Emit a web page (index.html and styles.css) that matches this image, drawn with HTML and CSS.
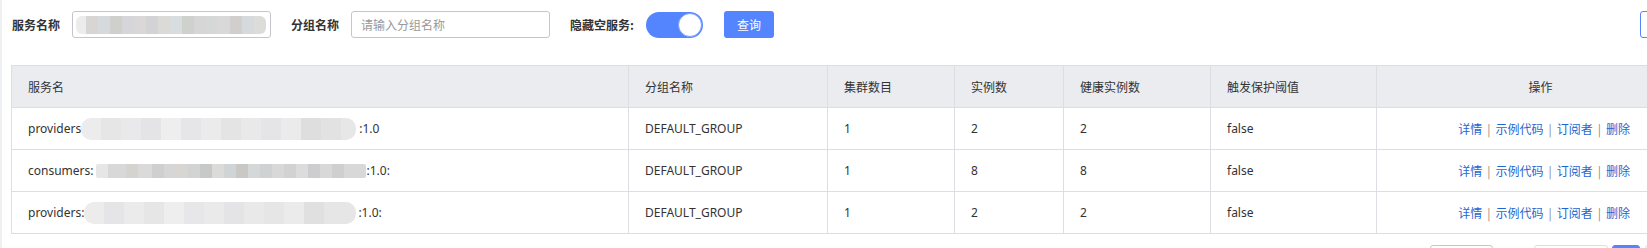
FILE: index.html
```html
<!DOCTYPE html>
<html lang="zh-CN">
<head>
<meta charset="utf-8">
<title>服务列表</title>
<link rel="stylesheet" href="styles.css">
</head>
<body>
<div class="page">
  <div class="toolbar">
    <span class="label">服务名称</span>
    <div class="input"><span class="mask mask-input"></span></div>
    <span class="label label-gap">分组名称</span>
    <div class="input"><span class="placeholder">请输入分组名称</span></div>
    <span class="label label-gap">隐藏空服务:</span>
    <div class="switch"><span class="knob"></span></div>
    <button class="btn-primary">查询</button>
    <button class="btn-outline"></button>
  </div>

  <table class="tbl">
    <colgroup>
      <col class="c1"><col class="c2"><col class="c3"><col class="c4"><col class="c5"><col class="c6"><col class="c7">
    </colgroup>
    <thead>
      <tr>
        <th>服务名</th><th>分组名称</th><th>集群数目</th><th>实例数</th><th>健康实例数</th><th>触发保护阈值</th><th class="center">操作</th>
      </tr>
    </thead>
    <tbody>
      <tr>
        <td><span class="name">providers<span class="mask mask-a"></span>:1.0</span></td>
        <td>DEFAULT_GROUP</td><td>1</td><td>2</td><td>2</td><td>false</td>
        <td class="ops"><a>详情</a><i>|</i><a>示例代码</a><i>|</i><a>订阅者</a><i>|</i><a>删除</a></td>
      </tr>
      <tr>
        <td><span class="name">consumers:<span class="mask mask-b"></span>:1.0:</span></td>
        <td>DEFAULT_GROUP</td><td>1</td><td>8</td><td>8</td><td>false</td>
        <td class="ops"><a>详情</a><i>|</i><a>示例代码</a><i>|</i><a>订阅者</a><i>|</i><a>删除</a></td>
      </tr>
      <tr>
        <td><span class="name">providers:<span class="mask mask-c"></span>:1.0:</span></td>
        <td>DEFAULT_GROUP</td><td>1</td><td>2</td><td>2</td><td>false</td>
        <td class="ops"><a>详情</a><i>|</i><a>示例代码</a><i>|</i><a>订阅者</a><i>|</i><a>删除</a></td>
      </tr>
    </tbody>
  </table>

  <div class="pager">
    <span class="pg pg-size"></span>
    <span class="pg pg-wide"></span>
    <span class="pg pg-active"></span>
    <span class="pg pg-next"></span>
  </div>
</div>
</body>
</html>
```

FILE: styles.css
```css
html, body {
  margin: 0;
  padding: 0;
  background: #fff;
  overflow: hidden;
  height: 248px;
}
body {
  font-family: "Noto Sans", "Noto Sans CJK SC", sans-serif;
  font-size: 12px;
  color: #333;
}
.page {
  width: 1718px;
  height: 248px;
  overflow: hidden;
  border-left: 2px solid #eef0f4;
  box-sizing: border-box;
}
.toolbar {
  display: flex;
  align-items: center;
  height: 27px;
  padding: 11px 18px 0 10px;
}
.label {
  font-family: "Noto Sans CJK SC", sans-serif;
  font-weight: 700;
  font-size: 12px;
  color: #333;
  margin-right: 12px;
  white-space: nowrap;
}
.label-gap { margin-left: 20px; }
.input {
  width: 199px;
  height: 27px;
  box-sizing: border-box;
  border: 1px solid #c4c6cf;
  border-radius: 3px;
  display: flex;
  align-items: center;
  padding-left: 9px;
}
.placeholder {
  font-family: "Noto Sans CJK SC", sans-serif;
  color: #999;
  font-size: 12px;
}
.switch {
  width: 57px;
  height: 26px;
  border-radius: 13px;
  background: #5584ff;
  position: relative;
  box-sizing: border-box;
}
.knob {
  position: absolute;
  right: 1px;
  top: 1px;
  width: 24px;
  height: 24px;
  border-radius: 50%;
  background: #fff;
  box-sizing: border-box;
  border: 1px solid #7aa0ff;
}
.btn-primary {
  margin-left: 21px;
  width: 50px;
  height: 27px;
  border: none;
  border-radius: 3px;
  background: #5584ff;
  color: #fff;
  font-family: "Noto Sans CJK SC", sans-serif;
  font-size: 12px;
  padding: 0;
}
.btn-outline {
  margin-left: auto;
  width: 60px;
  height: 27px;
  border: 1px solid #5584ff;
  border-radius: 3px;
  background: #fff;
  padding: 0;
}
.mask {
  display: inline-block;
  vertical-align: middle;
  border-radius: 10px;
  filter: blur(0.6px);
}
.mask-input {
  width: 190px;
  height: 18px;
  margin-left: -6px;
  background: linear-gradient(90deg,
    #ececec 0 10px, #d8d6d4 10px 22px, #d6dadd 22px 34px, #cfcfcb 34px 46px,
    #d6d6d8 46px 58px, #d9d7d8 58px 70px, #d3d2d4 70px 82px, #dcdad6 82px 94px,
    #d8dde0 94px 106px, #cfd1cc 106px 118px, #d6d6d6 118px 130px, #d5d8d6 130px 142px,
    #d9d9d9 142px 154px, #d2cece 154px 166px, #d5dadc 166px 178px, #dcdcdb 178px 190px);
  border-radius: 6px;
}
.tbl {
  margin: 27px 0 0 9px;
  border-collapse: collapse;
  table-layout: fixed;
  width: 1693px;
  border: 1px solid #dcdee3;
}
.c1 { width: 617px; }
.c2 { width: 199px; }
.c3 { width: 127px; }
.c4 { width: 109px; }
.c5 { width: 147px; }
.c6 { width: 166px; }
.c7 { width: 328px; }
.tbl th, .tbl td {
  border: 1px solid #dcdee3;
  text-align: left;
  padding: 0 0 0 16px;
  font-weight: 400;
  white-space: nowrap;
  overflow: hidden;
}
.tbl th {
  height: 41px;
  background: #ebecf0;
  color: #333;
  font-family: "Noto Sans CJK SC", sans-serif;
}
.tbl td {
  height: 41px;
  color: #333;
}
.tbl th.center { text-align: center; padding-left: 0; }
.name { display: inline-flex; align-items: center; }
.mask-a {
  width: 275px;
  height: 22px;
  margin: 0 3px 0 0;
  background: linear-gradient(90deg,
    #ececec 0 20px, #e6e6e6 20px 40px, #e9e9eb 40px 60px, #e4e4e6 60px 80px,
    #eeeeee 80px 100px, #e6e6e8 100px 120px, #ebebeb 120px 140px, #e4e4e4 140px 160px,
    #e9e9e9 160px 180px, #e5e5e7 180px 200px, #ebebeb 200px 220px, #dedede 220px 240px,
    #e2e2e2 240px 260px, #e7e7e7 260px 275px);
}
.mask-b {
  width: 270px;
  height: 14px;
  border-radius: 2px;
  margin: 0 1px 0 2px;
  background: linear-gradient(90deg,
    #e6e6e6 0 12px, #d8d8d8 12px 30px, #d5d3d0 30px 42px, #dadada 42px 56px,
    #cfcfcf 56px 68px, #d6d6d6 68px 80px, #d8d6d3 80px 92px, #d2d4d4 92px 104px,
    #c8c8c8 104px 116px, #dbdbd9 116px 128px, #d0d4d6 128px 140px, #cac8c4 140px 152px,
    #d4d8d9 152px 164px, #cfd2d2 164px 176px, #d8d8d8 176px 188px, #d2d2d2 188px 200px,
    #dcdcdc 200px 212px, #cdcdcf 212px 224px, #d8d8d8 224px 236px, #cfcfcf 236px 248px,
    #d8d8d8 248px 270px);
}
.mask-c {
  width: 272px;
  height: 22px;
  margin: 0 2px 0 0;
  background: linear-gradient(90deg,
    #ececec 0 20px, #e5e5e7 20px 40px, #ebebeb 40px 60px, #e6e6e6 60px 80px,
    #eeeeee 80px 100px, #e7e7e9 100px 120px, #eaeaea 120px 140px, #e4e4e6 140px 160px,
    #e9e9e9 160px 180px, #e6e6e6 180px 200px, #ebebeb 200px 220px, #e0e0e0 220px 240px,
    #e6e6e6 240px 272px);
}
.ops {
  text-align: right !important;
  padding: 0 74px 0 0 !important;
  font-family: "Noto Sans CJK SC", sans-serif;
}
.ops a {
  color: #1f66d1;
  cursor: pointer;
}
.ops i {
  font-style: normal;
  color: #8a8a8a;
  margin: 0 5px;
}
.pager {
  display: flex;
  justify-content: flex-end;
  align-items: flex-start;
  margin-top: 11px;
  width: 1705px;
}
.pg {
  display: block;
  height: 28px;
  box-sizing: border-box;
  border: 1px solid #c4c6cf;
  border-radius: 3px;
}
.pg-size { width: 63px; margin-right: 41px; }
.pg-wide { width: 74px; margin-right: 4px; border-color: #dcdee3; }
.pg-active { width: 28px; background: #5584ff; border-color: #5584ff; margin-right: 5px; }
.pg-next { width: 62px; border-color: #dcdee3; }
```
